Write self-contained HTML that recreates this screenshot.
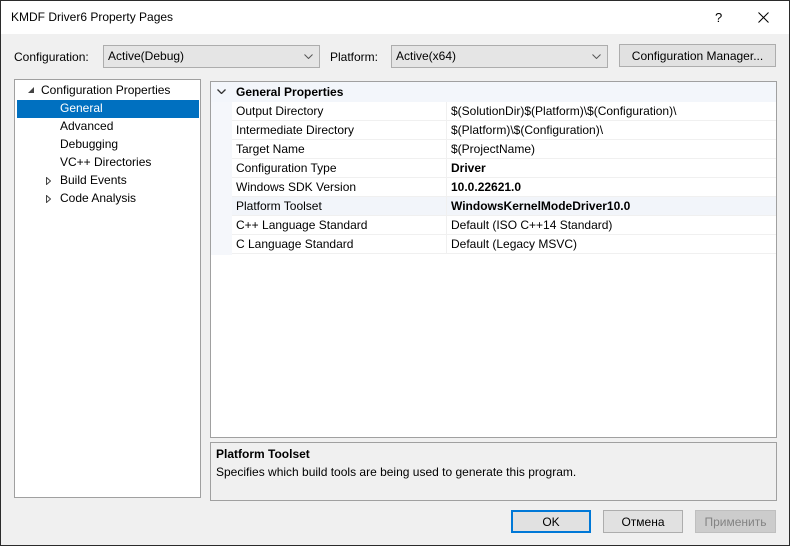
<!DOCTYPE html>
<html><head><meta charset="utf-8"><style>
*{box-sizing:border-box;margin:0;padding:0}
body{width:790px;height:546px;background:#2b2b2b;font-family:"Liberation Sans","Noto Sans CJK SC",sans-serif;font-size:12px;color:#000;position:relative;overflow:hidden}
.win{position:absolute;left:1px;top:1px;width:788px;height:544px;background:#f0f0f0}
.title{position:absolute;left:0;top:0;width:788px;height:33px;background:#fff}
.abs{position:absolute;white-space:nowrap}
.combo{position:absolute;height:23px;background:#e5e5e5;border:1px solid #adadad;padding:3px 0 0 4px}
.combo svg{position:absolute;right:6px;top:8px}
.btn{position:absolute;height:23px;background:#e1e1e1;border:1px solid #adadad;text-align:center;padding-top:4px}
.tree{position:absolute;left:13px;top:78px;width:187px;height:419px;background:#fff;border:1px solid #a0a0a0}
.ti{position:absolute;height:18px;line-height:17px}
.grid{position:absolute;left:209px;top:80px;width:567px;height:357px;background:#fff;border:1px solid #a0a0a0}
.gut{position:absolute;left:0;top:0;width:21px;height:173px;background:#f5f7fb}
.row{position:absolute;left:21px;width:544px;height:19px;border-bottom:1px solid #f0f0f0;line-height:18px}
.row span{position:absolute}
.row .v{left:214px;padding-left:4px;border-left:1px solid #f0f0f0;height:19px}
.desc{position:absolute;left:209px;top:441px;width:567px;height:59px;border:1px solid #a0a0a0;background:#f0f0f0}
</style></head><body><div class="win">
<div class="title"></div>
<div class="abs" style="left:10px;top:9px">KMDF Driver6 Property Pages</div>
<div class="abs" style="left:714px;top:9px;font-size:13px">?</div>
<svg class="abs" style="left:757px;top:11px" width="11" height="11"><path d="M0.5 0.5L10.5 10.5M10.5 0.5L0.5 10.5" stroke="#000" stroke-width="1"/></svg>
<div class="abs" style="left:13px;top:49px">Configuration:</div>
<div class="combo" style="left:102px;top:44px;width:217px">Active(Debug)<svg width="9" height="5"><path d="M0.5 0.5L4.5 4.5L8.5 0.5" stroke="#555" fill="none"/></svg></div>
<div class="abs" style="left:329px;top:49px">Platform:</div>
<div class="combo" style="left:390px;top:44px;width:217px">Active(x64)<svg width="9" height="5"><path d="M0.5 0.5L4.5 4.5L8.5 0.5" stroke="#555" fill="none"/></svg></div>
<div class="btn" style="left:618px;top:43px;width:157px">Configuration Manager...</div>
<div class="tree">
<svg class="abs" style="left:13px;top:7px" width="6" height="6"><path d="M6 0L6 6L0 6Z" fill="#444"/></svg>
<div class="ti" style="left:26px;top:2px">Configuration Properties</div>
<div class="ti" style="left:2px;top:20px;width:182px;background:#0070c0;color:#fff;padding-left:43px">General</div>
<div class="ti" style="left:45px;top:38px">Advanced</div>
<div class="ti" style="left:45px;top:56px">Debugging</div>
<div class="ti" style="left:45px;top:74px">VC++ Directories</div>
<svg class="abs" style="left:31px;top:97px" width="5" height="8"><path d="M0.5 0.5L4.5 4L0.5 7.5Z" fill="none" stroke="#444"/></svg>
<div class="ti" style="left:45px;top:92px">Build Events</div>
<svg class="abs" style="left:31px;top:115px" width="5" height="8"><path d="M0.5 0.5L4.5 4L0.5 7.5Z" fill="none" stroke="#444"/></svg>
<div class="ti" style="left:45px;top:110px">Code Analysis</div>
</div>
<div class="grid">
<div class="abs" style="left:0;top:0;width:565px;height:20px;background:#f3f6fb"></div>
<svg class="abs" style="left:6px;top:7px" width="9" height="5"><path d="M0.5 0.5L4.5 4.5L8.5 0.5" stroke="#333" fill="none" stroke-width="1.3"/></svg>
<div class="abs" style="left:25px;top:3px;font-weight:bold">General Properties</div>
<div class="gut" style="top:20px;height:153px"></div>
<div class="row" style="top:20px"><span style="left:4px">Output Directory</span><span class="v">$(SolutionDir)$(Platform)\$(Configuration)\</span></div>
<div class="row" style="top:39px"><span style="left:4px">Intermediate Directory</span><span class="v">$(Platform)\$(Configuration)\</span></div>
<div class="row" style="top:58px"><span style="left:4px">Target Name</span><span class="v">$(ProjectName)</span></div>
<div class="row" style="top:77px"><span style="left:4px">Configuration Type</span><span class="v" style="font-weight:bold">Driver</span></div>
<div class="row" style="top:96px"><span style="left:4px">Windows SDK Version</span><span class="v" style="font-weight:bold">10.0.22621.0</span></div>
<div class="row" style="top:115px;background:#f2f5fa"><span style="left:4px">Platform Toolset</span><span class="v" style="font-weight:bold">WindowsKernelModeDriver10.0</span></div>
<div class="row" style="top:134px"><span style="left:4px">C++ Language Standard</span><span class="v">Default (ISO C++14 Standard)</span></div>
<div class="row" style="top:153px"><span style="left:4px">C Language Standard</span><span class="v">Default (Legacy MSVC)</span></div>
</div>
<div class="desc">
<div class="abs" style="left:5px;top:4px;font-weight:bold">Platform Toolset</div>
<div class="abs" style="left:5px;top:22px">Specifies which build tools are being used to generate this program.</div>
</div>
<div class="btn" style="left:510px;top:509px;width:80px;border:2px solid #0078d7;padding-top:3px">OK</div>
<div class="btn" style="left:602px;top:509px;width:80px">Отмена</div>
<div class="btn" style="left:694px;top:509px;width:81px;background:#ccc;border-color:#bfbfbf;color:#838383">Применить</div>
</div></body></html>
